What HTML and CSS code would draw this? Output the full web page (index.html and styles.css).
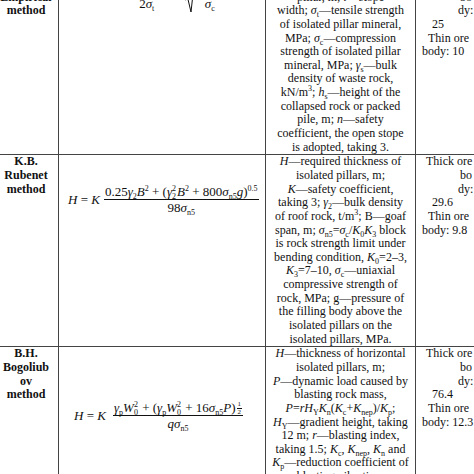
FILE: index.html
```html
<!DOCTYPE html>
<html>
<head>
<meta charset="utf-8">
<link rel="stylesheet" href="styles.css">
</head>
<body>
<div class="table">
  <!-- row 1 -->
  <div class="cell name">Classical<br>Empirical<br>method</div>
  <div class="cell form">
    <div class="f f1">
      <span class="lhs"><i>H</i> = </span>
      <span class="frac"><span class="num"><i>l</i><sup>2</sup><i>γ</i><sub>s</sub><i>h</i><sub>s</sub></span><span class="den">2<i>σ</i><sub>t</sub></span></span>
      <span class="op">+ <i>n</i></span>
      <span class="rad">
        <svg class="radsign" viewBox="0 0 10 34" preserveAspectRatio="none"><path d="M0.5 21 L2.8 19.5 L6 33 L9.6 0.5 L10 0.5" fill="none" stroke="#111" stroke-width="1"/></svg>
        <span class="radicand"><span class="frac"><span class="num"><i>nγ</i><sub>s</sub><i>h</i><sub>s</sub></span><span class="den"><i>σ</i><sub>c</sub></span></span></span>
      </span>
    </div>
  </div>
  <div class="cell desc"><i>H</i>—thickness of the roof<br>pillar, m; <i>l</i>—stope<br>width; <i>σ</i><sub>t</sub>—tensile strength<br>of isolated pillar mineral,<br>MPa; <i>σ</i><sub>c</sub>—compression<br>strength of isolated pillar<br>mineral, MPa; <i>γ</i><sub>s</sub>—bulk<br>density of waste rock,<br>kN/m<sup>3</sup>; <i>h</i><sub>s</sub>—height of the<br>collapsed rock or packed<br>pile, m; <i>n</i>—safety<br>coefficient, the open stope<br>is adopted, taking 3.</div>
  <div class="cell val"><span class="v-thick">Thick ore</span><span class="v-bo">bo</span><span class="v-dy">dy:</span><span class="v-num">25</span><span class="v-thin">Thin ore</span><span class="v-body">body: 10</span></div>

  <!-- row 2 -->
  <div class="cell name">K.B.<br>Rubenet<br>method</div>
  <div class="cell form">
    <div class="f f2">
      <span class="lhs"><i>H</i> = <i>K</i></span>
      <span class="frac"><span class="num">0.25<i>γ</i><sub>2</sub><i>B</i><sup>2</sup> + (<i>γ</i><span class="ss"><span>2</span><span>2</span></span><i>B</i><sup>2</sup> + 800<i>σ</i><sub>n5</sub><i>g</i>)<sup>0.5</sup></span><span class="den">98<i>σ</i><sub>n5</sub></span></span>
    </div>
  </div>
  <div class="cell desc"><i>H</i>—required thickness of<br>isolated pillars, m;<br><i>K</i>—safety coefficient,<br>taking 3; <i>γ</i><sub>2</sub>—bulk density<br>of roof rock, t/m<sup>3</sup>; B—goaf<br>span, m; <i>σ</i><sub>n5</sub>=<i>σ</i><sub>c</sub>/<i>K</i><sub>0</sub><i>K</i><sub>3</sub> block<br>is rock strength limit under<br>bending condition, <i>K</i><sub>0</sub>=2–3,<br><i>K</i><sub>3</sub>=7–10, <i>σ</i><sub>c</sub>—uniaxial<br>compressive strength of<br>rock, MPa; g—pressure of<br>the filling body above the<br>isolated pillars on the<br>isolated pillars, MPa.</div>
  <div class="cell val"><span class="v-thick">Thick ore</span><span class="v-bo">bo</span><span class="v-dy">dy:</span><span class="v-num">29.6</span><span class="v-thin">Thin ore</span><span class="v-body">body: 9.8</span></div>

  <!-- row 3 -->
  <div class="cell name">B.H.<br>Bogoliub<br>ov<br>method</div>
  <div class="cell form">
    <div class="f f3">
      <span class="lhs"><i>H</i> = <i>K</i></span>
      <span class="frac"><span class="num"><i>γ</i><sub>p</sub><i>W</i><span class="ss"><span>2</span><span>0</span></span> + (<i>γ</i><sub>p</sub><i>W</i><span class="ss"><span>2</span><span>0</span></span> + 16<i>σ</i><sub>n5</sub><i>P</i>)<span class="half"><span class="hn">1</span><span class="hd">2</span></span></span><span class="den"><i>qσ</i><sub>n5</sub></span></span>
    </div>
  </div>
  <div class="cell desc"><i>H</i>—thickness of horizontal<br>isolated pillars, m;<br><i>P</i>—dynamic load caused by<br>blasting rock mass,<br><i>P</i>=<i>rH</i><sub>Y</sub><i>K</i><sub>n</sub>(<i>K</i><sub>c</sub>+<i>K</i><sub>nep</sub>)/<i>K</i><sub>p</sub>;<br><i>H</i><sub>Y</sub>—gradient height, taking<br>12 m; <i>r</i>—blasting index,<br>taking 1.5; <i>K</i><sub>c</sub>, <i>K</i><sub>nep</sub>, <i>K</i><sub>n</sub> and<br><i>K</i><sub>p</sub>—reduction coefficient of<br>blasting vibration.</div>
  <div class="cell val"><span class="v-thick">Thick ore</span><span class="v-bo">bo</span><span class="v-dy">dy:</span><span class="v-num">76.4</span><span class="v-thin">Thin ore</span><span class="v-body">body: 12.3</span></div>
</div>
</body>
</html>
```

FILE: styles.css
```css
html, body {
  margin: 0;
  padding: 0;
  overflow: hidden;
  background: #ffffff;
}

body {
  font-family: "Liberation Serif", "Times New Roman", serif;
  font-size: 12px;
  color: #111111;
}

.table {
  display: grid;
  grid-template-columns: 59px 207px 150px 90px;
  margin-top: -23px;
  line-height: 13.64px;
  width: max-content;
}

.cell {
  box-sizing: border-box;
  border-right: 1px solid #444444;
  border-bottom: 1px solid #444444;
}

.name {
  font-weight: bold;
  text-align: center;
  padding-right: 6px;
}

.desc {
  text-align: center;
  white-space: nowrap;
}

.val {
  white-space: nowrap;
}

.val span {
  display: block;
}

.v-thick { padding-left: 10px; }
.v-bo { padding-left: 44px; }
.v-dy { padding-left: 42px; }
.v-num { padding-left: 16px; }
.v-thin { padding-left: 12px; }
.v-body { padding-left: 6px; }

sub, sup {
  font-size: 8px;
  line-height: 0;
}
sub { vertical-align: -3px; }
sup { vertical-align: 5px; }

/* formulas */
.f {
  display: flex;
  align-items: center;
  font-size: 13px;
  line-height: 14px;
  white-space: nowrap;
}

.f1 { padding: 2px 0 0 50px; }
.f2 { padding: 30px 0 0 9px; }
.f3 { padding: 54px 0 0 15px; }

.lhs { margin-right: 4px; }
.f3 .lhs { margin-right: 7px; }

.op { margin: 0 0 0 3px; }

.frac {
  display: inline-flex;
  flex-direction: column;
  align-items: center;
}

.num {
  border-bottom: 1px solid #111111;
  padding: 0 1px;
}

.den {
  padding-top: 1px;
}

.ss {
  display: inline-flex;
  flex-direction: column;
  font-size: 8px;
  line-height: 8px;
  height: 14px;
  vertical-align: 5px;
  margin-right: 1px;
}

.half {
  display: inline-flex;
  flex-direction: column;
  align-items: center;
  font-size: 7px;
  line-height: 7px;
  height: 14px;
  vertical-align: 6px;
  margin-left: 1px;
}

.hn {
  border-bottom: 1px solid #111111;
  padding: 0 1px;
}

.rad {
  display: inline-flex;
  align-items: stretch;
  margin-left: 4px;
}

.radsign {
  width: 10px;
  height: auto;
  display: block;
}

.radicand {
  border-top: 1px solid #111111;
  padding: 1px 2px 0 2px;
}
```
